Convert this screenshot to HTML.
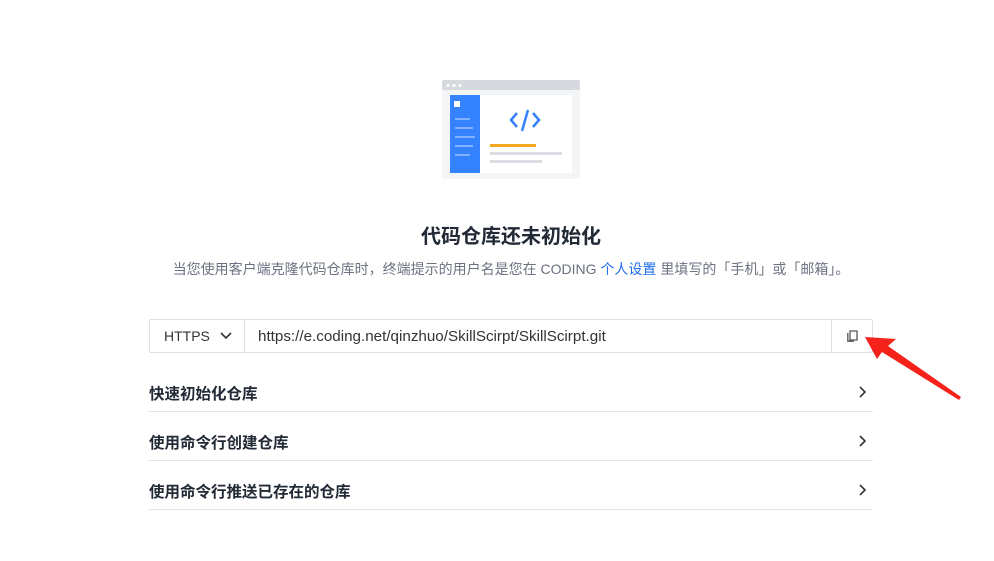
<!DOCTYPE html>
<html><head><meta charset="utf-8"><style>
*{margin:0;padding:0;box-sizing:border-box}
body{width:994px;height:561px;background:#fff;font-family:"Liberation Sans","Noto Sans CJK SC",sans-serif;position:relative;overflow:hidden;color:#323a45}
.abs{position:absolute}
h1{position:absolute;left:0;width:1022px;top:220px;text-align:center;font-size:20px;font-weight:bold;color:#222a36}
.sub{position:absolute;left:0;width:1022px;top:259px;text-align:center;font-size:14px;color:#6b7280}
.sub a{color:#1f6feb}
.box{position:absolute;left:149px;top:319px;width:724px;height:34px;border:1px solid #dcdfe6;border-radius:2px}
.sel{position:absolute;left:0;top:0;width:95px;height:32px;border-right:1px solid #dcdfe6;font-size:14px;line-height:32px;padding-left:14px;color:#333}
.url{position:absolute;left:108px;top:1px;line-height:32px;font-size:15.2px;color:#333}
.cp{position:absolute;right:0;top:0;width:41px;height:32px;border-left:1px solid #dcdfe6}
.row{position:absolute;left:149px;width:724px;height:49px;border-bottom:1px solid #e2e4e8;font-size:15.5px;font-weight:bold;color:#222a36}
.row span{position:absolute;left:0;top:19px}
.row svg{position:absolute;right:6px;top:23px}
</style></head><body>
<svg class="abs" style="left:430px;top:70px" width="160" height="120">
<rect x="12" y="10" width="138" height="99" rx="3" fill="#f4f5f7"/>
<rect x="12" y="10" width="138" height="10" rx="2" fill="#d6d9de"/>
<circle cx="18" cy="15.5" r="1.5" fill="#fff"/><circle cx="24" cy="15.5" r="1.5" fill="#fff"/><circle cx="30" cy="15.5" r="1.5" fill="#fff"/>
<rect x="20" y="25" width="122" height="78" fill="#fff"/>
<rect x="20" y="25" width="30" height="78" fill="#3482fd"/>
<rect x="24" y="31" width="6" height="6" fill="#fff"/>
<g stroke="#9cc2ff" stroke-width="1.5"><line x1="25" y1="49" x2="40" y2="49"/><line x1="25" y1="58" x2="43" y2="58"/><line x1="25" y1="67" x2="45" y2="67"/><line x1="25" y1="76" x2="43" y2="76"/><line x1="25" y1="85" x2="40" y2="85"/></g>
<g stroke="#3482fd" stroke-width="2.5" fill="none"><polyline points="87,43 81,50 87,57"/><polyline points="103,43 109,50 103,57"/><line x1="98" y1="40" x2="92" y2="61"/></g>
<rect x="60" y="74" width="46" height="3" fill="#f5a623"/>
<rect x="60" y="82" width="72" height="3" fill="#dadde2"/>
<rect x="60" y="90" width="52" height="3" fill="#dadde2"/>
</svg>
<h1>代码仓库还未初始化</h1>
<div class="sub">当您使用客户端克隆代码仓库时，终端提示的用户名是您在 CODING <a>个人设置</a> 里填写的「手机」或「邮箱」。</div>
<div class="box"><div class="sel">HTTPS<svg class="abs" style="left:70px;top:12px" width="12" height="8"><polyline points="1,1 6,6 11,1" fill="none" stroke="#333" stroke-width="1.6"/></svg></div>
<div class="url">https://e.coding.net/qinzhuo/SkillScirpt/SkillScirpt.git</div>
<div class="cp"><svg class="abs" style="left:14px;top:9px" width="14" height="14"><path d="M4 2h7v9H4z M1.8 4v8.2h6" fill="none" stroke="#555" stroke-width="1.3"/></svg></div></div>
<div class="row" style="top:363px"><span>快速初始化仓库</span><svg width="8" height="12"><polyline points="1,1 6,6 1,11" fill="none" stroke="#333" stroke-width="1.6"/></svg></div>
<div class="row" style="top:412px"><span>使用命令行创建仓库</span><svg width="8" height="12"><polyline points="1,1 6,6 1,11" fill="none" stroke="#333" stroke-width="1.6"/></svg></div>
<div class="row" style="top:461px"><span>使用命令行推送已存在的仓库</span><svg width="8" height="12"><polyline points="1,1 6,6 1,11" fill="none" stroke="#333" stroke-width="1.6"/></svg></div>
<svg class="abs" style="left:0;top:0" width="994" height="561"><polygon points="865,337 896,339 888,346 961,397 959,400 882,352 877,359" fill="#f5221b"/></svg>
</body></html>
